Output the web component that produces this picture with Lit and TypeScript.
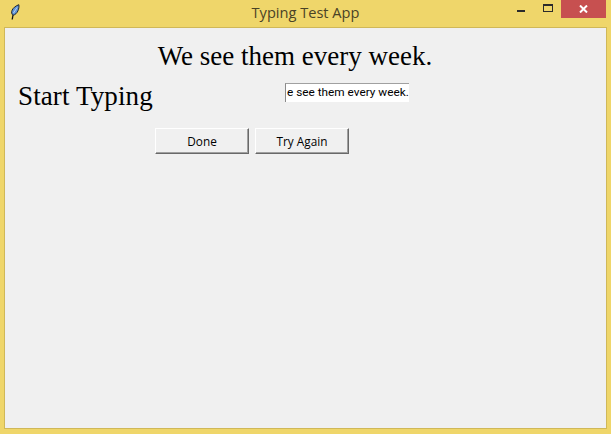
import { LitElement, html, css } from "lit";
import { customElement } from "lit/decorators.js";

@customElement("app-root")
export class AppRoot extends LitElement {
  static styles = css`
    :host { display: block; width: 611px; height: 434px; overflow: hidden; }
    .window {
      box-sizing: border-box; width: 611px; height: 434px; background: #efd66a;
      display: flex; flex-direction: column; padding: 0 4px 5px 4px;
    }
    .titlebar { height: 27px; flex: none; display: flex; align-items: flex-start; position: relative; margin: 0 -4px; }
    .feather { margin: 4px 0 0 10px; width: 10px; height: 16px; flex: none; }
    .title {
      position: absolute; left: 0; right: 0; top: 4px; text-align: center;
      font: 14.6px/17px "Open Sans", "Noto Sans", sans-serif; color: #4a4326;
    }
    .controls { margin-left: auto; display: flex; margin-right: 5px; }
    .ctl { display: flex; align-items: flex-start; justify-content: center; height: 18px; }
    .ctl svg { display: block; }
    .min { width: 28px; }
    .min svg { margin-top: 10px; }
    .max { width: 26px; }
    .max svg { margin-top: 4px; }
    .close { width: 45px; background: #c75050; }
    .close svg { margin-top: 5px; }
    .client {
      flex: 1; background: #f0f0f0; border: 1px solid #d0b858; display: flex; flex-direction: column;
    }
    .prompt {
      font: 27px/32px "Liberation Serif", serif; color: #000; text-align: center;
      margin: 12px 0 0 0; padding-right: 21px; white-space: nowrap;
    }
    .row { display: flex; align-items: flex-start; margin-top: 8px; }
    .label { font: 27px/32px "Liberation Serif", serif; letter-spacing: 0.12px; color: #000; margin-left: 13px; width: 267px; white-space: nowrap; }
    .entry {
      box-sizing: border-box; width: 124px; height: 19px; margin-top: 3px; background: #fff;
      border-top: 1px solid #a0a0a0; border-left: 1px solid #8a8a8a; overflow: hidden;
      font: 11.8px/17px Roboto, "Noto Sans", sans-serif; color: #000; padding-left: 1px; white-space: nowrap;
    }
    .buttons { display: flex; gap: 6px; margin: 16px 0 0 150px; }
    .btn {
      box-sizing: border-box; width: 94px; height: 26px; background: #f0f0f0; color: #000;
      border: 1px solid; border-color: #fff #696969 #696969 #fff;
      box-shadow: inset -1px -1px 0 #a0a0a0;
      font: 11.8px/22px "Open Sans", "Noto Sans", sans-serif; text-align: center; padding: 0;
    }
  `;

  render() {
    return html`
      <div class="window">
        <div class="titlebar">
          <svg class="feather" viewBox="0 0 10 16">
            <path d="M2.2 15.5 L3 11" stroke="#111" stroke-width="1.3" fill="none"/>
            <path d="M3 11.2 C0.2 9 1.5 3.5 8.8 0.7 C9.6 4 7.5 10.5 3 11.2 Z" fill="#5f93d6" stroke="#1c2430" stroke-width="1"/>
            <path d="M3.5 9 L7 3.5" stroke="#cfe0f5" stroke-width="0.8" fill="none"/>
          </svg>
          <div class="title">Typing Test App</div>
          <div class="controls">
            <div class="ctl min">
              <svg width="8" height="2"><rect width="8" height="2" fill="#2b2b2b"/></svg>
            </div>
            <div class="ctl max">
              <svg width="10" height="8"><rect x="0.5" y="0.5" width="9" height="7" fill="none" stroke="#2b2b2b"/><rect width="10" height="2" fill="#2b2b2b"/></svg>
            </div>
            <div class="ctl close">
              <svg width="9" height="8"><path d="M1 .5 L8 7.5 M8 .5 L1 7.5" stroke="#fff" stroke-width="2"/></svg>
            </div>
          </div>
        </div>
        <div class="client">
          <div class="prompt">We see them every week.</div>
          <div class="row">
            <div class="label">Start Typing</div>
            <div class="entry">e see them every week.</div>
          </div>
          <div class="buttons">
            <button class="btn">Done</button>
            <button class="btn">Try Again</button>
          </div>
        </div>
      </div>
    `;
  }
}
